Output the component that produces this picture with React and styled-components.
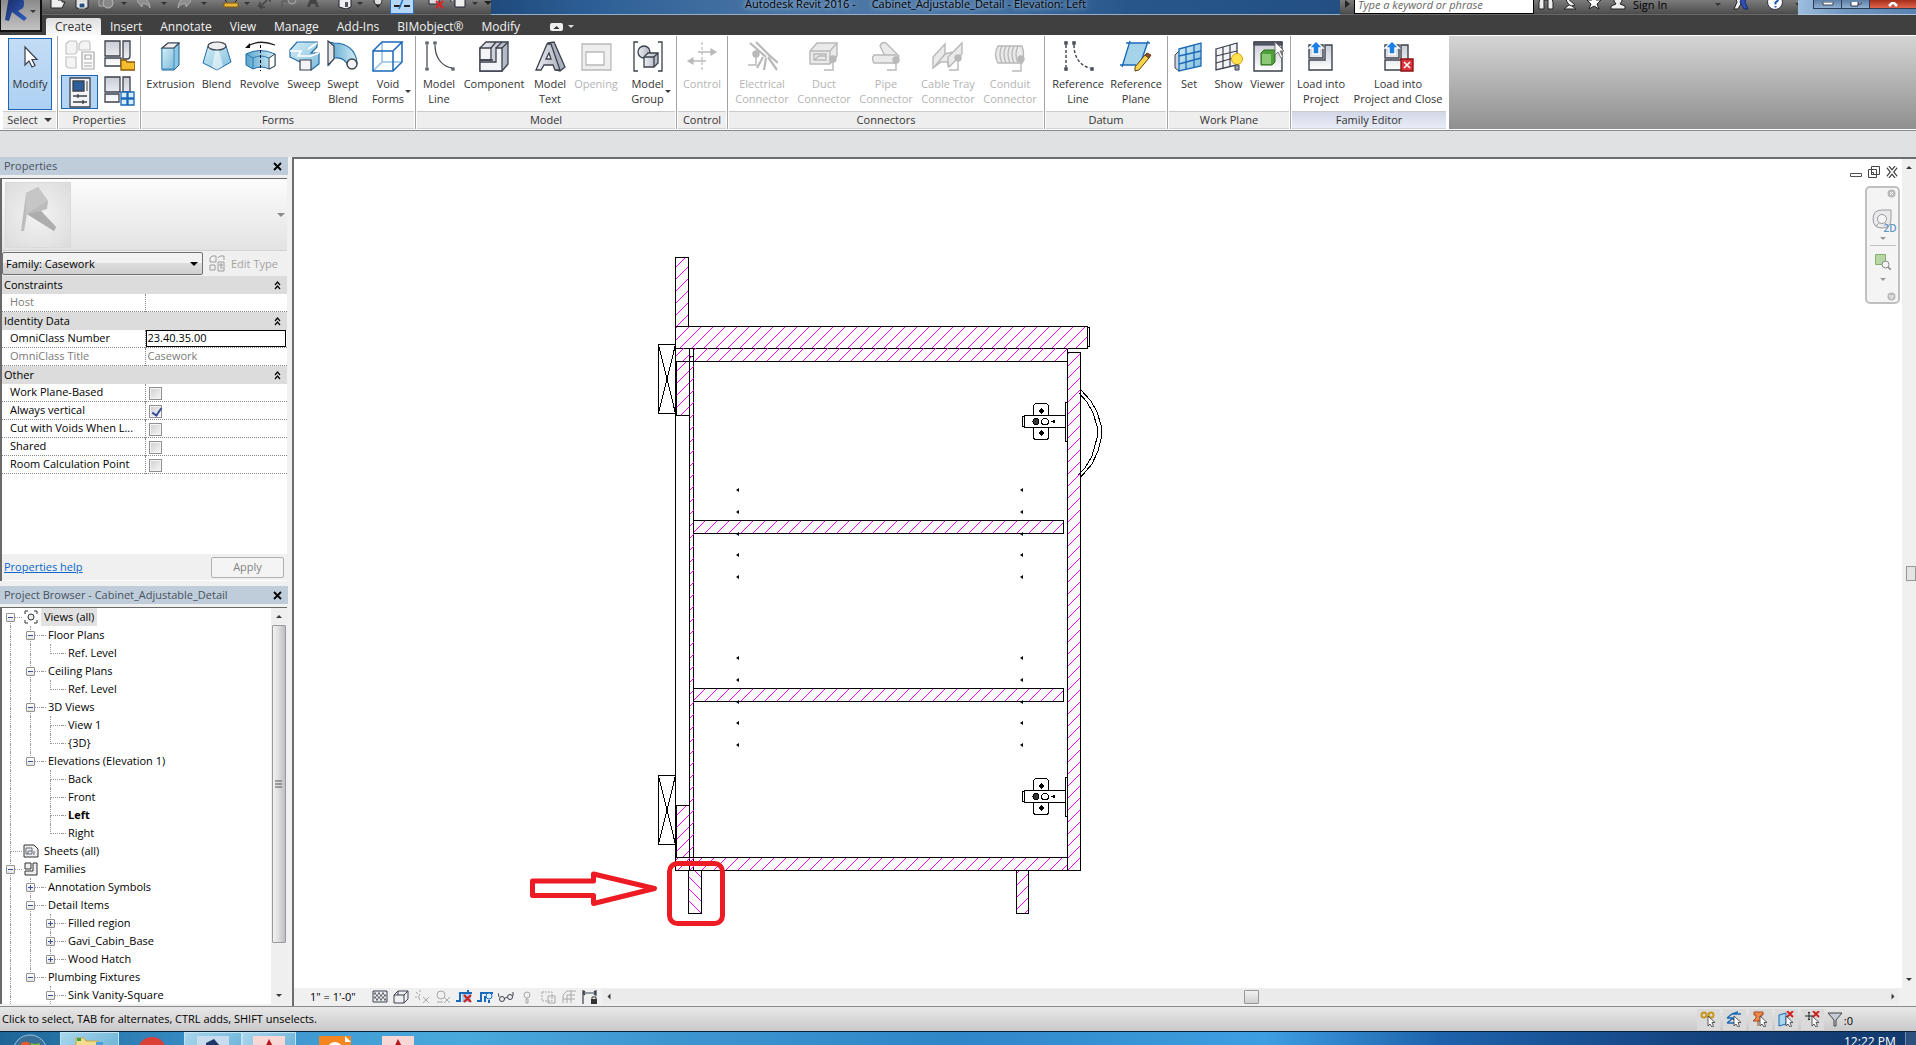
import React from "react";
import styled, { createGlobalStyle, css } from "styled-components";

const FONT = '"Open Sans", "Noto Sans", sans-serif';

const Global = createGlobalStyle`
  * { box-sizing: border-box; }
  html, body { margin: 0; height: 100%; overflow: hidden; }
  body { font: 11px/18px ${FONT}; color: #000; background: #f0f0f0; }
  #root { height: 100%; }
  button, input, select { font: inherit; color: inherit; margin: 0; padding: 0; border: 0; background: none; border-radius: 0; outline: 0; }
  svg { display: block; flex: none; }
`;

/* ---------- shared ---------- */

const Window = styled.div`
  height: 100vh;
  display: flex;
  flex-direction: column;
  overflow: hidden;
`;

const Caret = styled.i`
  flex: none;
  width: 0;
  height: 0;
  border: ${(p) => p.$size || 3}px solid transparent;
  border-bottom-width: 0;
  border-top-color: ${(p) => p.$color || "#3a3a3a"};
`;

const DefsHolder = styled.svg`
  position: absolute;
`;

const Gradients = () => (
  <DefsHolder width="0" height="0" aria-hidden="true">
    <defs>
      <linearGradient id="gBlue" x1="0" y1="0" x2="1" y2="1">
        <stop offset="0" stopColor="#d5eef7" />
        <stop offset="1" stopColor="#7fbcdb" />
      </linearGradient>
      <linearGradient id="gDeep" x1="0" y1="0" x2="1" y2="0">
        <stop offset="0" stopColor="#5aa5cd" />
        <stop offset="1" stopColor="#d3edf7" />
      </linearGradient>
      <linearGradient id="gGrey" x1="0" y1="0" x2="0" y2="1">
        <stop offset="0" stopColor="#c9ccd6" />
        <stop offset="1" stopColor="#ffffff" />
      </linearGradient>
      <linearGradient id="gSide" x1="0" y1="0" x2="1" y2="0">
        <stop offset="0" stopColor="#eceef2" />
        <stop offset="1" stopColor="#aeb4c0" />
      </linearGradient>
      <linearGradient id="gRevit" x1="0" y1="0" x2="1" y2="1">
        <stop offset="0" stopColor="#18275f" />
        <stop offset="1" stopColor="#2f5fc0" />
      </linearGradient>
    </defs>
  </DefsHolder>
);

const Icon = ({ size = 32, box = 32, children, ...rest }) => (
  <svg width={size} height={size} viewBox={`0 0 ${box} ${box}`} fill="none" aria-hidden="true" {...rest}>
    {children}
  </svg>
);

const INK = "#3b404c";
const SKY = "#1a68b8";
const OFF = "#b9b9b9";

const big = {
  cursor: (
    <Icon>
      <path d="M11 7v18l4-4 3 6 3-1.500-3-6h5z" fill="#fff" stroke={INK} strokeWidth="1.200" />
    </Icon>
  ),
  extrusion: (
    <Icon>
      <path d="M7 8l6-5h11v22l-5 5H7z" fill="#8cc6e0" stroke="#1e5f94" />
      <path d="M7 8h12v21H7z" fill="url(#gBlue)" stroke="#3f8fc0" />
      <path d="M7 8l6-5h11l-5 5z" fill="#f0f0f2" stroke={INK} strokeWidth="1.200" />
    </Icon>
  ),
  blend: (
    <Icon>
      <path d="M7 6L2 23l14 7 14-8L25 6z" fill="url(#gBlue)" stroke="#1e6ba8" />
      <path d="M14 11l-3 16 5 3 6-4-4-15z" fill="#fff" opacity=".55" />
      <ellipse cx="16" cy="6" rx="9" ry="4" fill="#eeeef1" stroke={INK} strokeWidth="1.200" />
    </Icon>
  ),
  revolve: (
    <Icon>
      <path d="M2 14q14-7 29 0v12l-6 3q-8-4-16 0l-7-4z" fill="url(#gDeep)" stroke="#1e6ba8" />
      <path d="M2 14l7 4q7-4 16 0M9 18v11" stroke="#2a7ab0" />
      <path d="M25 18l6-4v12l-6 3z" fill="#fff" stroke={INK} />
      <path d="M16.500 5v26" stroke="#000" strokeDasharray="3 2" />
      <path d="M4 6q12-7 27-1" stroke="#222" strokeWidth="1.300" />
      <path d="M1 8l5-5v5z" fill="#111" />
    </Icon>
  ),
  sweep: (
    <Icon>
      <path d="M9 2h20v5l-6 6h8v11l-8 6-11-8-10-5v-7z" fill="url(#gBlue)" stroke="#1e6ba8" strokeWidth="1.200" />
      <path d="M2 11h11l-3 5h13l8-3M29 3l-9 6" stroke="#fff" strokeWidth="1.600" />
      <path d="M12 20h11v10H12z" fill="#f4f4f6" stroke={INK} strokeWidth="1.200" />
    </Icon>
  ),
  swept: (
    <Icon>
      <path d="M2 2l5 1c13 0 22 7 23 20l-9 3C19 20 14 17 7 18l-5 7z" fill="url(#gDeep)" stroke="#1e6ba8" strokeWidth="1.200" />
      <path d="M1 1l6 5v13l-6 6z" fill="#e6e8ec" stroke={INK} strokeWidth="1.200" />
      <circle cx="25" cy="24" r="5" fill="#f4f4f6" stroke={INK} strokeWidth="1.400" />
    </Icon>
  ),
  voids: (
    <Icon stroke={SKY} strokeWidth="1.500">
      <path d="M10 2v20L1 31M10 22h20" stroke="#8ec0e8" />
      <path d="M1 11h20v20H1zM1 11l9-9h20l-9 9M30 2v20l-9 9" />
    </Icon>
  ),
  line: (
    <Icon stroke={INK} strokeWidth="1.200">
      <path d="M4 5v22M12 5c0 12 6 21 17 23" />
      <path d="M3 2h2v2H3zM3 28h2v2H3zM11 2h2v2h-2zM29 28h2v2h-2z" fill="#fff" />
    </Icon>
  ),
  component: (
    <Icon stroke={INK} strokeWidth="1.300">
      <path d="M2 8l6-6h22v22l-6 7H2z" fill="url(#gSide)" />
      <path d="M2 8h11v12H2zM2 22h16V8h6v23H2z" fill="#f3f4f7" />
      <path d="M13 8l5-6M18 8l6-6M24 8l6-6M2 20h13" />
    </Icon>
  ),
  text: (
    <Icon stroke={INK} strokeWidth="1.300">
      <path d="M14 3l6-1 11 25-5 4-4-1z" fill="#aab0bd" />
      <path d="M13 4h4l9 26h-5l-2-5h-9l-3 5H2z" fill="url(#gSide)" />
      <path d="M15 13l2 6h-5z" fill="#fff" />
    </Icon>
  ),
  opening: (
    <Icon stroke={OFF} strokeWidth="1.300">
      <path d="M2 4h29v26H2z" fill="#eee" />
      <path d="M6 12h18v13H6z" fill="#fff" />
    </Icon>
  ),
  group: (
    <Icon stroke={INK} strokeWidth="1.300">
      <path d="M6 2H2v29h4M26 2h4v29h-4" />
      <circle cx="12" cy="12" r="6" fill="url(#gSide)" />
      <path d="M12 17l4-4h10v10l-4 4H12z" fill="url(#gSide)" />
      <path d="M12 17h10v10M22 17l4-4" />
    </Icon>
  ),
  control: (
    <Icon stroke={OFF} strokeWidth="1.200">
      <path d="M16 2v29" strokeDasharray="3 2" />
      <path d="M12 12h14M20 21H6" strokeWidth="1.600" />
      <path d="M25 9l5 3-5 3zM7 18l-5 3 5 3z" fill={OFF} />
    </Icon>
  ),
  electrical: (
    <Icon stroke={OFF} strokeWidth="1.400">
      <path d="M4 3l16 14M10 2l14 14M17 17l-6 11M20 18l-2 12M22 17l9 13M23 15l9 8" strokeWidth="2.200" />
      <circle cx="10" cy="14" r="3" fill={OFF} />
      <path d="M10 14v11H2" />
    </Icon>
  ),
  duct: (
    <Icon stroke={OFF} strokeWidth="1.400">
      <path d="M2 11l7-8h20v13l-7 8H2z" fill="#eaeaea" />
      <path d="M2 11h20v13M22 11l7-8M6 14h12v6H6zM6 20l5-4h7" />
      <circle cx="25" cy="19" r="3" fill={OFF} />
      <path d="M25 20v10h-9" />
    </Icon>
  ),
  pipe: (
    <Icon stroke={OFF} strokeWidth="1.400">
      <path d="M10 6q2-5 6-3l13 13-5 7-10-9z" fill="#eaeaea" />
      <path d="M4 15h22v8H4q-3-4 0-8z" fill="#eaeaea" />
      <circle cx="26" cy="20" r="3" fill={OFF} />
      <path d="M26 20v10h-9" />
    </Icon>
  ),
  tray: (
    <Icon stroke={OFF} strokeWidth="1.400">
      <path d="M1 17L13 4v10l8-2 9-9v11L17 27l-1-5-7 0-8 6z" fill="#eaeaea" />
      <path d="M3 26l10-12M16 27V17l5-5" />
      <circle cx="26" cy="18" r="3" fill={OFF} />
      <path d="M26 18v12h-9" />
    </Icon>
  ),
  conduit: (
    <Icon stroke={OFF} strokeWidth="1.400">
      <path d="M4 6h24q3 8 0 17H4q-5-8 0-17z" fill="#eaeaea" />
      <path d="M8 6q-4 8 0 17M12 6q-4 8 0 17M16 6q-4 8 0 17M20 6q-4 8 0 17M24 6q-4 8 0 17" />
      <circle cx="27" cy="19" r="3" fill={OFF} />
      <path d="M27 19v12h-9" />
    </Icon>
  ),
  refLine: (
    <Icon stroke={INK} strokeWidth="1.400">
      <path d="M4 5v22M12 5c0 12 6 21 16 23" strokeDasharray="3 2" />
      <path d="M3 2h2v2H3zM3 28h2v2H3zM11 2h2v2h-2zM29 28h2v2h-2z" fill="#fff" />
    </Icon>
  ),
  refPlane: (
    <Icon>
      <path d="M9 3h19l-7 22H2z" fill="#a4d3ea" />
      <path d="M6 3h24M10 1L2 27M28 1l-7 21M0 25h16" stroke={SKY} strokeWidth="1.300" />
      <path d="M15 27l10-12 4 3-10 12-4 1z" fill="#fbd34a" stroke="#5b4314" />
      <path d="M25 15l4 3 2-3-4-2z" fill="#9b4a32" stroke="#5b4314" />
    </Icon>
  ),
  set: (
    <Icon stroke={SKY}>
      <path d="M2 15l4-4 8-2v18L6 31l-4-3z" fill="#cfd5df" stroke={INK} />
      <path d="M6 9l22-6v23L6 31z" fill="url(#gBlue)" strokeWidth="1.300" />
      <path d="M13 7v22M21 5v23M6 16l22-5M6 24l22-6" strokeWidth="1.300" />
    </Icon>
  ),
  show: (
    <Icon stroke={INK}>
      <path d="M3 9l21-6v22L3 30z" fill="#f3f3f5" strokeWidth="1.300" />
      <path d="M10 7v22M17 5v22M3 16l21-5M3 23l21-6" strokeWidth="1.200" />
      <circle cx="24" cy="19" r="5.500" fill="#ffe14d" stroke="#d7a21a" />
      <path d="M22 25h4v5h-4z" fill="#9aa0ac" />
    </Icon>
  ),
  viewer: (
    <Icon stroke={INK}>
      <path d="M2 2h28v29H2z" fill="url(#gGrey)" strokeWidth="1.400" />
      <path d="M2 2h28v3H2z" fill="#555a66" />
      <path d="M9 13l3-3h11v12l-3 3H9z" fill="#4fa03a" stroke="#2c6b1d" />
      <path d="M10 14h9v10h-9z" fill="#8cc977" stroke="none" />
      <path d="M23 2v13l3-3 3 6 2-1-3-6h4z" fill="#fff" stroke="#777" />
    </Icon>
  ),
  load: (
    <Icon stroke={INK} strokeWidth="1.400">
      <path d="M4 5h14v13H4zM4 20h16V5h7v25H4z" fill="url(#gGrey)" />
      <path d="M11 1l7 7h-4v6H8V8H4z" fill="#1b7fe6" stroke="#fff" />
    </Icon>
  ),
  loadClose: (
    <Icon stroke={INK} strokeWidth="1.400">
      <path d="M3 5h14v13H3zM3 20h16V5h7v25H3z" fill="url(#gGrey)" />
      <path d="M10 1l7 7h-4v6H7V8H3z" fill="#1b7fe6" stroke="#fff" />
      <path d="M19 19h12v12H19z" fill="#d8343a" stroke="#8d1216" />
      <path d="M22 22l6 6M28 22l-6 6" stroke="#fff" strokeWidth="1.600" />
    </Icon>
  ),
  types: (
    <Icon stroke="#c3c3c3" strokeWidth="1.200">
      <path d="M3 5l3-3h7l1 2v9l-2 2H3zM16 5l3-3h7l1 2v7H16zM3 18h10v11H5l-2-2z" fill="#f4f4f4" />
      <path d="M19 13h12v17H19z" fill="#fafafa" stroke="#a9a9a9" />
      <path d="M22 16h6v4h-6zM21 24h8M21 27h8" stroke="#a9a9a9" />
    </Icon>
  ),
  category: (
    <Icon stroke={INK} strokeWidth="1.300">
      <path d="M2 2h15v15H2zM20 2h7v15q0 3-3 3h-4zM2 19h16v8H2z" fill="url(#gGrey)" />
      <path d="M18 21h5l1 2h8v8H18z" fill="#f3bd2e" stroke="#8a5b07" />
    </Icon>
  ),
  palette: (
    <Icon stroke={INK} strokeWidth="1.300">
      <path d="M6 2h20v29H6z" fill="#f3f4f7" />
      <path d="M9 5h11v10H9z" fill="#2d5f9c" />
      <path d="M22 5h2v10h-2z" fill="#999" stroke="none" />
      <path d="M9 20h14M9 26h14M14 18v4M19 24v4" />
    </Icon>
  ),
  familyTypes: (
    <Icon stroke={INK} strokeWidth="1.300">
      <path d="M2 2h15v15H2zM20 2h7v15H20zM2 19h14v8H2z" fill="url(#gGrey)" />
      <path d="M18 17h6v6h-6zM25 17h6v6h-6zM18 24h6v6h-6zM25 24h6v6h-6z" fill="#d7edfa" stroke={SKY} />
    </Icon>
  ),
};

const tiny = (children) => (
  <Icon size={16} box={16}>
    {children}
  </Icon>
);

/* ---------- header ---------- */

const Header = styled.header`
  display: grid;
  grid-template: 15px 20px / 42px 1fr;
  background: #404040;
  flex: none;
`;

const AppButton = styled.button`
  grid-row: 1 / 3;
  height: 32px;
  display: flex;
  align-items: flex-end;
  overflow: hidden;
  border: solid #111;
  border-width: 0 2px 2px 1px;
  background: linear-gradient(#8b8b8b, #c2c2c2);
  gap: 2px;
`;

const AppLogo = styled.svg`
  align-self: flex-start;
`;

const AppCaret = styled(Caret)`
  align-self: center;
  margin-top: -8px;
`;

const TitleBar = styled.div`
  display: flex;
  min-width: 0;
  overflow: hidden;
`;

const QuickAccess = styled.div`
  flex: none;
  width: 449px;
  display: flex;
  align-items: flex-end;
  padding: 0 2px 5px 4px;
  height: 15px;
  background: linear-gradient(#7b7b7b, #4c4c4c);
  border-bottom: 1px solid #686868;
`;

const QuickButton = styled.button`
  flex: none;
  width: ${(p) => p.$width || 24}px;
  display: flex;
  align-items: flex-end;
  justify-content: center;
  ${(p) =>
    p.$active &&
    css`
      margin-bottom: -5px;
      padding-bottom: 3px;
      background: #b5d6f5;
      border: 1px solid #2a6fc0;
    `}
`;

const QuickCaret = styled(Caret)`
  margin: 0 3px 4px;
`;

const QuickLine = styled.i`
  width: 1px;
  height: 20px;
  margin: 0 5px -5px 6px;
  background: #9a9a9a;
`;

const TitleText = styled.div`
  flex: 1;
  display: flex;
  justify-content: center;
  align-items: flex-end;
  gap: 16px;
  white-space: nowrap;
  line-height: 12px;
  padding-bottom: 4px;
  height: 15px;
  background: linear-gradient(90deg, #1f4a7d, #2d5f96 12%, #4b76a5 35%, #4b76a5 55%, #28568b 75%, #234f83);
  border-bottom: 1px solid #94aecb;
  text-shadow: 0 0 6px #9fb8d2, 0 0 4px #9fb8d2;
`;

const InfoCenter = styled.div`
  flex: none;
  width: 458px;
  height: 15px;
  display: flex;
  align-items: flex-end;
  background: linear-gradient(#7b7b7b, #4c4c4c);
  border-bottom: 1px solid #686868;
`;

const SideCaret = styled.i`
  border: 4px solid transparent;
  border-right-width: 0;
  border-left: 5px solid #222;
  margin: 0 4px 6px 5px;
`;

const Search = styled.input`
  width: 180px;
  height: 14px;
  flex: none;
  background: #fff;
  border: solid #000;
  border-width: 0 1px 1px;
  padding: 0 3px 5px;
  font-style: italic;
  line-height: 12px;
  &::placeholder { color: #666; opacity: 1; }
`;

const InfoIcons = styled.div`
  flex: 1;
  display: flex;
  align-items: flex-end;
  padding-bottom: 4px;
`;

const InfoButton = styled.button`
  display: flex;
  width: ${(p) => p.$width || 24}px;
  justify-content: center;
  align-items: flex-end;
`;

const SignIn = styled.button`
  line-height: 11px;
  width: 82px;
  text-align: left;
  padding-left: 3px;
`;

const WindowButtons = styled.div`
  flex: none;
  width: 118px;
  height: 15px;
  display: flex;
  justify-content: flex-end;
  background: linear-gradient(100deg, #9fbfdf, #7196bf 40%, #5a82b0);
  border-bottom: 1px solid #b4c8dd;
`;

const WindowButton = styled.button`
  width: ${(p) => (p.$close ? 47 : 28)}px;
  height: 9px;
  display: flex;
  align-items: flex-end;
  justify-content: center;
  overflow: hidden;
  border: solid #2c3e55;
  border-width: 0 0 1px 1px;
  background: ${(p) => (p.$close ? "linear-gradient(#a52d1a, #e0654a)" : "linear-gradient(#5f7fa5, #8fb0d2)")};
`;

const TabBar = styled.nav`
  display: flex;
  align-items: flex-end;
  padding-left: 4px;
`;

const Tab = styled.button`
  height: 17px;
  font-size: 12px;
  line-height: 16px;
  padding: 0 9px;
  color: ${(p) => (p.$active ? "#333" : "#f2f2f2")};
  background: ${(p) => (p.$active ? "linear-gradient(#dedede, #fafafa)" : "none")};
  border-radius: 2px 2px 0 0;
`;

const TabMinimise = styled.button`
  display: flex;
  align-items: center;
  gap: 5px;
  height: 17px;
  margin-left: 21px;
`;

const QuickAccessBar = () => (
  <QuickAccess>
    <QuickButton aria-label="Open">{tiny(<path d="M1 14V5h6l1 2h4v2h3l-3 6H1z" fill="#eee" stroke="#222" />)}</QuickButton>
    <QuickButton aria-label="Save">{tiny(<><path d="M2 2h12v13H2z" fill="#ddd" stroke="#223" /><path d="M5 10h6v5H5z" fill="#234e7c" stroke="#fff" /></>)}</QuickButton>
    <QuickButton aria-label="Synchronize">{tiny(<><path d="M1 4h9v9H1z" fill="#777" stroke="#aaa" /><circle cx="10" cy="10" r="5" fill="#888" stroke="#bbb" /></>)}</QuickButton>
    <QuickCaret $color="#333" />
    <QuickButton $width={28} aria-label="Undo">{tiny(<path d="M1 8l5-5v3q8 0 8 9-2-5-8-4v3z" fill="#8e8e8e" stroke="#aaa" />)}</QuickButton>
    <QuickCaret $color="#333" />
    <QuickButton $width={28} aria-label="Redo">{tiny(<path d="M15 8l-5-5v3q-8 0-8 9 2-5 8-4v3z" fill="#8e8e8e" stroke="#aaa" />)}</QuickButton>
    <QuickCaret $color="#333" />
    <QuickLine />
    <QuickButton $width={20} aria-label="Measure">{tiny(<><path d="M1 6h14M4 3L1 6l3 3M12 3l3 3-3 3" stroke="#222" /><path d="M1 10h14v4H1z" fill="#e8b536" stroke="#7a5a10" /></>)}</QuickButton>
    <QuickCaret $color="#333" />
    <QuickButton aria-label="Aligned Dimension">{tiny(<path d="M3 14L13 4M3 9v5h5M13 9V4H8M1 12l4 4" stroke="#444" strokeWidth="1.500" />)}</QuickButton>
    <QuickButton aria-label="Tag">{tiny(<><path d="M1 14V8h6" stroke="#555" /><circle cx="11" cy="7" r="4" stroke="#aaa" fill="#777" /></>)}</QuickButton>
    <QuickButton aria-label="Text">{tiny(<path d="M2 14L7 1h2l5 13h-3l-1-3H6l-1 3z" fill="#444" />)}</QuickButton>
    <QuickLine />
    <QuickButton $width={18} aria-label="3D View">{tiny(<><path d="M2 7l6-5 6 5v7l-5 2-7-2z" fill="#eee" stroke="#223" /><path d="M8 9h3v5H8z" fill="#555" /></>)}</QuickButton>
    <QuickCaret $color="#333" />
    <QuickButton aria-label="Section">{tiny(<><path d="M3 8l5 7 4-6z" fill="#222" /><circle cx="8" cy="8" r="4" fill="#ddd" stroke="#333" /></>)}</QuickButton>
    <QuickButton $active aria-label="Thin Lines">{tiny(<><path d="M0 5h7M0 12h7M10 5h6M10 12h6" stroke="#222" strokeWidth="2" /><path d="M11 0L5 15" stroke="#2573c4" strokeWidth="1.500" /></>)}</QuickButton>
    <QuickLine />
    <QuickButton $width={22} aria-label="Close Hidden">{tiny(<><path d="M1 3h10v8H1z" fill="#ddd" stroke="#223" /><path d="M8 8l7 7M15 8l-7 7" stroke="#d22" strokeWidth="2" /></>)}</QuickButton>
    <QuickButton $width={22} aria-label="Switch Windows">{tiny(<path d="M5 6h10v8H5zM1 9V2h8" fill="#eee" stroke="#223" />)}</QuickButton>
    <QuickCaret $color="#333" />
    <QuickCaret $color="#222" $size={4} />
  </QuickAccess>
);

const TABS = ["Create", "Insert", "Annotate", "View", "Manage", "Add-Ins", "BIMobject®", "Modify"];

const AppHeader = () => (
  <Header>
    <AppButton aria-label="Application menu">
      <AppLogo width="27" height="24" viewBox="0 0 27 24" aria-hidden="true">
        <path d="M8-4h12q5 6 2 12l-5 3 9 7-3 3-12-9-3 9-4-1z" fill="url(#gRevit)" />
      </AppLogo>
      <AppCaret />
    </AppButton>
    <TitleBar>
      <QuickAccessBar />
      <TitleText>
        <span>Autodesk Revit 2016 -</span>
        <span>Cabinet_Adjustable_Detail - Elevation: Left</span>
      </TitleText>
      <InfoCenter>
        <SideCaret />
        <Search placeholder="Type a keyword or phrase" aria-label="Search help" />
        <InfoIcons>
          <InfoButton aria-label="Search">{tiny(<path d="M1 15V8l2-6h3v13zM15 15V8l-2-6h-3v13zM6 6h4" fill="#eee" stroke="#222" />)}</InfoButton>
          <InfoButton aria-label="Subscription">{tiny(<path d="M3 2l10 9q-7 4-10-9zM7 11l-5 4h12l-4-3" fill="#eee" stroke="#222" />)}</InfoButton>
          <InfoButton aria-label="Favorites">{tiny(<path d="M8 1l2 5h5l-4 4 2 5-5-3-5 3 2-5-4-4h5z" fill="#fff" stroke="#222" />)}</InfoButton>
          <InfoButton aria-label="Account">{tiny(<path d="M4 0h8v7l-2 3 5 2v3H1v-3l5-2-2-3z" fill="#eee" stroke="#222" />)}</InfoButton>
          <SignIn>Sign In</SignIn>
          <QuickCaret $color="#333" />
          <InfoButton $width={34} aria-label="Exchange Apps">{tiny(<><path d="M1 1h5l3 7-4 7H1l3-7z" fill="#eee" stroke="#222" /><path d="M15 1h-5L7 8l4 7h4l-3-7z" fill="#2f4fb5" stroke="#1a2a66" /></>)}</InfoButton>
          <InfoButton $width={34} aria-label="Help">{tiny(<><circle cx="8" cy="8" r="7.500" fill="#fff" stroke="#334" /><path d="M5.500 6q0-3 3-3t2.500 3q-.5 1.500-2.500 2.500v2M8.500 12v1.500" stroke="#2257b8" strokeWidth="2" /></>)}</InfoButton>
          <QuickCaret $color="#333" />
        </InfoIcons>
      </InfoCenter>
      <WindowButtons>
        <WindowButton aria-label="Minimize"><svg width="12" height="6"><path d="M1 0h10v3H1z" fill="#fff" stroke="#445" /></svg></WindowButton>
        <WindowButton aria-label="Restore"><svg width="12" height="6"><path d="M1 0v4h7V0M8 2h3V0" fill="#fff" stroke="#334" /></svg></WindowButton>
        <WindowButton $close aria-label="Close"><svg width="12" height="6"><path d="M6 0l4 4M6 0L2 4" stroke="#fff" strokeWidth="2.500" /></svg></WindowButton>
      </WindowButtons>
    </TitleBar>
    <TabBar aria-label="Ribbon tabs">
      {TABS.map((t, i) => (
        <Tab key={t} $active={i === 0}>{t}</Tab>
      ))}
      <TabMinimise aria-label="Minimize ribbon">
        <svg width="13" height="8"><rect width="13" height="8" rx="2" fill="#eee" /><path d="M3.500 6l3-3 3 3z" fill="#333" /></svg>
        <Caret $color="#ddd" />
      </TabMinimise>
    </TabBar>
  </Header>
);

/* ---------- ribbon ---------- */

const Ribbon = styled.div`
  flex: none;
  display: flex;
  height: 96px;
  padding: 1px 0 1px 2px;
  background: #fff;
  border-bottom: 1px solid #8a8a8a;
`;

const RibbonRest = styled.div`
  flex: 1;
  margin-left: 1px;
  background: linear-gradient(#d5d5d5, #8f8f8f);
`;

const Panel = styled.section`
  flex: none;
  display: flex;
  flex-direction: column;
  width: ${(p) => p.$width}px;
  border-right: 1px solid #a3a3a3;
  &:last-of-type { border-right-color: #fff; }
`;

const PanelBody = styled.div`
  flex: 1;
  display: flex;
  padding-left: ${(p) => p.$pad || 0}px;
`;

const PanelTitle = styled.div`
  height: 18px;
  margin: 0 1px;
  border-top: 1px solid #cbcbcb;
  border-bottom: 1px solid #d4d4d4;
  background: ${(p) => (p.$accent ? "linear-gradient(#d3d7e6, #e9ecf8)" : "#eeeeee")};
  color: #333;
  line-height: 16px;
  display: flex;
  align-items: center;
  justify-content: center;
  gap: 6px;
`;

const Tool = styled.button`
  flex: none;
  width: ${(p) => p.$width}px;
  display: flex;
  flex-direction: column;
  align-items: center;
  padding-top: 4px;
  gap: 4px;
  color: ${(p) => (p.disabled ? "#b4b4b4" : "#333")};
  line-height: 15px;
  white-space: pre;
  text-align: center;
`;

const ToolLabel = styled.span`
  display: flex;
  align-items: center;
  position: relative;
  & > i { position: absolute; right: -7px; top: 14px; }
`;

const ModifyTool = styled(Tool)`
  height: 72px;
  margin-top: 2px;
  padding-top: 1px;
  border: 1px solid #1c66b8;
  background: linear-gradient(#c4dcf5, #add1f3);
`;

const ToolGrid = styled.div`
  display: grid;
  grid-template: 36px 36px / 40px 40px;
  padding-top: 1px;
`;

const SmallTool = styled.button`
  display: flex;
  align-items: center;
  justify-content: center;
  ${(p) =>
    p.$active &&
    css`
      margin: 2px 1px 0 2px;
      border: 1px solid #1c66b8;
      background: #b4d4f4;
    `}
`;

const GROUPS = [
  { title: "Forms", width: 275, pad: 2, tools: [["Extrusion", 55, "extrusion"], ["Blend", 37, "blend"], ["Revolve", 49, "revolve"], ["Sweep", 40, "sweep"], ["Swept\nBlend", 38, "swept"], ["Void\nForms", 52, "voids", "menu"]] },
  { title: "Model", width: 261, pad: 1, tools: [["Model\nLine", 44, "line"], ["Component", 66, "component"], ["Model\nText", 46, "text"], ["Opening", 46, "opening", "off"], ["Model\nGroup", 57, "group", "menu"]] },
  { title: "Control", width: 51, pad: 0, tools: [["Control", 50, "control", "off"]] },
  { title: "Connectors", width: 317, pad: 3, tools: [["Electrical\nConnector", 62, "electrical", "off"], ["Duct\nConnector", 62, "duct", "off"], ["Pipe\nConnector", 62, "pipe", "off"], ["Cable Tray\nConnector", 62, "tray", "off"], ["Conduit\nConnector", 62, "conduit", "off"]] },
  { title: "Datum", width: 123, pad: 4, tools: [["Reference\nLine", 58, "refLine"], ["Reference\nPlane", 58, "refPlane"]] },
  { title: "Work Plane", width: 123, pad: 2, tools: [["Set", 38, "set"], ["Show", 41, "show"], ["Viewer", 37, "viewer"]] },
  { title: "Family Editor", width: 157, pad: 1, accent: true, tools: [["Load into\nProject", 58, "load"], ["Load into\nProject and Close", 96, "loadClose"]] },
];

const RibbonBar = () => (
  <Ribbon>
    <Panel $width={56}>
      <PanelBody $pad={6}>
        <ModifyTool $width={44}>
          {big.cursor}
          <span>Modify</span>
        </ModifyTool>
      </PanelBody>
      <PanelTitle>Select <Caret $size={4} /></PanelTitle>
    </Panel>
    <Panel $width={83}>
      <PanelBody $pad={1}>
        <ToolGrid>
          <SmallTool disabled aria-label="Type Properties">{big.types}</SmallTool>
          <SmallTool aria-label="Family Category">{big.category}</SmallTool>
          <SmallTool $active aria-label="Properties">{big.palette}</SmallTool>
          <SmallTool aria-label="Family Types">{big.familyTypes}</SmallTool>
        </ToolGrid>
      </PanelBody>
      <PanelTitle>Properties</PanelTitle>
    </Panel>
    {GROUPS.map((g) => (
      <Panel key={g.title} $width={g.width}>
        <PanelBody $pad={g.pad}>
          {g.tools.map(([label, width, icon, state]) => (
            <Tool key={label} $width={width} disabled={state === "off"}>
              {big[icon]}
              <ToolLabel>
                {label}
                {state === "menu" && <Caret $size={3} />}
              </ToolLabel>
            </Tool>
          ))}
        </PanelBody>
        <PanelTitle $accent={g.accent}>{g.title}</PanelTitle>
      </Panel>
    ))}
    <RibbonRest />
  </Ribbon>
);

const OptionsBar = styled.div`
  flex: none;
  height: 26px;
  background: #e0e1e3;
`;

/* ---------- docked palettes ---------- */

const Workspace = styled.main`
  flex: 1;
  min-height: 0;
  display: flex;
`;

const Dock = styled.aside`
  flex: none;
  width: 292px;
  padding-right: 4px;
  display: flex;
  flex-direction: column;
  background: #f0f0f0;
`;

const PaletteTitle = styled.h2`
  flex: none;
  display: flex;
  align-items: center;
  justify-content: space-between;
  height: 18px;
  margin: 0 0 3px;
  padding: 0 6px 0 4px;
  font-size: 11px;
  font-weight: 400;
  line-height: 18px;
  color: #48515c;
  background: #bfcddb;
`;

const CloseButton = styled.button`
  display: flex;
`;

const Palette = styled.section`
  display: flex;
  flex-direction: column;
  flex: ${(p) => (p.$fill ? "1" : "none")};
  height: ${(p) => (p.$fill ? "auto" : "403px")};
  min-height: 0;
  margin: 0 1px ${(p) => (p.$fill ? 2 : 5)}px 0;
  border: solid #696969;
  border-width: 1px 0 0 2px;
`;

const Preview = styled.button`
  flex: none;
  display: flex;
  align-items: center;
  justify-content: space-between;
  height: 72px;
  padding: 2px 2px 2px 3px;
  background: linear-gradient(#fcfcfc, #e3e3e3);
  border-bottom: 1px solid #d2d2d2;
`;

const Thumb = styled.span`
  width: 66px;
  height: 66px;
  border: 1px solid #dadada;
  background: radial-gradient(#f3f3f3, #dcdcdc);
`;

const TypeRow = styled.div`
  flex: none;
  display: flex;
  align-items: center;
  height: 25px;
  gap: 6px;
`;

const SelectBox = styled.div`
  display: grid;
  align-items: center;
  width: 201px;
  height: 23px;
  border: 1px solid #707070;
  border-radius: 2px;
  background: linear-gradient(#f2f2f2 50%, #dddddd 50%, #d0d0d0);
  & > * { grid-area: 1 / 1; }
  & > i { justify-self: end; margin-right: 4px; pointer-events: none; }
`;

const Select = styled.select`
  appearance: none;
  width: 100%;
  padding-left: 3px;
`;

const EditType = styled.button`
  display: flex;
  align-items: center;
  gap: 5px;
  color: #a3a3a3;
`;

const TableArea = styled.div`
  flex: 1;
  background: #fff;
`;

const PropTable = styled.table`
  width: 100%;
  table-layout: fixed;
  border-spacing: 0;
  border-collapse: separate;
  & tr { height: 18px; }
`;

const GroupCell = styled.th`
  padding: 0 6px 0 2px;
  height: 18px;
  font-weight: 400;
  text-align: left;
  line-height: 18px;
  background: #dcdcdc;
  & > div { display: flex; justify-content: space-between; align-items: center; }
`;

const NameCell = styled.th`
  height: 18px;
  padding: 0 0 0 8px;
  font-weight: 400;
  text-align: left;
  vertical-align: top;
  line-height: 16px;
  white-space: nowrap;
  overflow: hidden;
  color: ${(p) => (p.$off ? "#7b7b7b" : "#000")};
  border-bottom: 1px dotted #888;
`;

const ValueCell = styled.td`
  height: 18px;
  padding: 0 1px 0 0;
  border-left: 1px dotted #888;
  border-bottom: 1px dotted #888;
`;

const ValueInput = styled.input`
  display: block;
  width: 100%;
  height: 17px;
  padding: 0 1px 2px;
  color: ${(p) => (p.disabled ? "#7b7b7b" : "#000")};
  border: 1px solid ${(p) => (p.$focus ? "#000" : "transparent")};
`;

const Check = styled.input`
  appearance: none;
  display: block;
  width: 13px;
  height: 13px;
  margin: 2px 0 0 3px;
  border: 1px solid #8e8f8f;
  background: linear-gradient(135deg, #cfcfcf, #f6f6f6);
  box-shadow: inset 0 0 0 1px #f4f4f4;
  &:checked::after {
    content: "";
    display: block;
    width: 4px;
    height: 8px;
    margin: 0 0 0 4px;
    border: solid #3a4c9a;
    border-width: 0 2px 2px 0;
    transform: rotate(35deg);
  }
`;

const PaletteFooter = styled.div`
  flex: none;
  height: 27px;
  display: flex;
  align-items: center;
  justify-content: space-between;
  padding: 0 3px 0 2px;
  border-bottom: 1px solid #fff;
  & a { color: #0a66c8; }
`;

const Apply = styled.button`
  width: 73px;
  height: 21px;
  border: 1px solid #adb2b5;
  border-radius: 2px;
  color: #838383;
  background: #f4f4f4;
`;

const CloseX = () => (
  <svg width="9" height="9" aria-hidden="true"><path d="M1 1l7 7M8 1L1 8" stroke="#000" strokeWidth="1.800" /></svg>
);

const Chevrons = () => (
  <svg width="7" height="9" aria-hidden="true"><path d="M1 4l2.500-3L6 4M1 8l2.500-3L6 8" fill="none" stroke="#000" strokeWidth="1.200" /></svg>
);

const PROPS = [
  { group: "Constraints" },
  { name: "Host", off: true, value: "" },
  { group: "Identity Data" },
  { name: "OmniClass Number", value: "23.40.35.00", focus: true },
  { name: "OmniClass Title", off: true, value: "Casework" },
  { group: "Other" },
  { name: "Work Plane-Based", checked: false },
  { name: "Always vertical", checked: true },
  { name: "Cut with Voids When L...", checked: false },
  { name: "Shared", checked: false },
  { name: "Room Calculation Point", checked: false },
];

const PropertyRow = ({ row, id }) =>
  row.group ? (
    <tr>
      <GroupCell colSpan={2}><div>{row.group}<Chevrons /></div></GroupCell>
    </tr>
  ) : (
    <tr>
      <NameCell $off={row.off}><label htmlFor={id}>{row.name}</label></NameCell>
      <ValueCell>
        {"checked" in row ? (
          <Check id={id} type="checkbox" defaultChecked={row.checked} />
        ) : (
          <ValueInput id={id} defaultValue={row.value} disabled={row.off} $focus={row.focus} />
        )}
      </ValueCell>
    </tr>
  );

const Properties = () => (
  <>
    <PaletteTitle>Properties<CloseButton aria-label="Close Properties"><CloseX /></CloseButton></PaletteTitle>
    <Palette>
      <Preview aria-label="Type selector">
        <Thumb>
          <svg width="64" height="64" viewBox="0 0 64 64" aria-hidden="true">
            <path d="M20 10l12-6 10 14-1 8-6 2 15 16-2 4-27-17-3 17h-3z" fill="#bcbcbc" />
            <path d="M20 10l12-6 10 14-22 13z" fill="#c6c6c6" />
            <path d="M35 28l15 16-2 4-27-17z" fill="#adadad" />
          </svg>
        </Thumb>
        <Caret $size={4} $color="#8c8c8c" />
      </Preview>
      <TypeRow>
        <SelectBox>
          <Select aria-label="Family" defaultValue="Family: Casework"><option>Family: Casework</option></Select>
          <Caret $size={4} $color="#000" />
        </SelectBox>
        <EditType disabled>
          <svg width="17" height="17" fill="none" stroke="#9c9c9c" aria-hidden="true"><path d="M1 3l2-2h4v6H1zM9 3l2-2h4v4M1 10h5v5H1zM9 7h6v9H9zM11 9h2v2h-2zM11 13h3" /></svg>
          Edit Type
        </EditType>
      </TypeRow>
      <TableArea>
        <PropTable>
          <tbody>
            {PROPS.map((row, i) => (
              <PropertyRow key={i} row={row} id={`prop-${i}`} />
            ))}
          </tbody>
        </PropTable>
      </TableArea>
      <PaletteFooter>
        <a href="#help">Properties help</a>
        <Apply disabled>Apply</Apply>
      </PaletteFooter>
    </Palette>
  </>
);

/* ---------- project browser ---------- */

const BrowserBody = styled.div`
  flex: 1;
  display: flex;
  min-height: 0;
  background: #fff;
`;

const Tree = styled.ul`
  flex: 1;
  min-width: 0;
  margin: 0;
  padding: 0;
  list-style: none;
  overflow: hidden;
`;

const TreeRow = styled.li`
  display: flex;
  align-items: center;
  height: 18px;
  white-space: nowrap;
  font-weight: ${(p) => (p.$bold ? 700 : 400)};
`;

/* One indent column: its vertical dotted guide, and the short stub to the right. */
const Guide = styled.span`
  flex: none;
  width: 20px;
  height: 18px;
  padding-left: 8px;
  display: grid;
  grid-template-rows: 10px 8px;
  grid-template-columns: 1px 1fr;
  & > i:nth-of-type(1) { border-left: 1px dotted ${(p) => (p.$up ? "#9a9a9a" : "transparent")}; }
  & > i:nth-of-type(2) { border-bottom: 1px dotted ${(p) => (p.$stub ? "#9a9a9a" : "transparent")}; }
  & > i:nth-of-type(3) { border-left: 1px dotted ${(p) => (p.$down ? "#9a9a9a" : "transparent")}; }
`;

const Expander = styled.button`
  position: relative;
  z-index: 1;
  flex: none;
  width: 9px;
  height: 9px;
  margin: 1px 7px 0 -16px;
  border: 1px solid #919191;
  border-radius: 1px;
  background:
    linear-gradient(#3b4f94, #3b4f94) center / 5px 1px no-repeat,
    ${(p) => (p.$open ? "" : "linear-gradient(#3b4f94, #3b4f94) center / 1px 5px no-repeat,")}
    linear-gradient(#fff, #e4e4e4);
`;

const Stub = styled.i`
  flex: none;
  width: 4px;
  height: 1px;
  margin: 1px 2px 0 0;
  border-bottom: 1px dotted #9a9a9a;
`;

const NodeIcon = styled.span`
  width: 18px;
  display: flex;
  justify-content: center;
`;

const NodeLabel = styled.span`
  padding: 0 3px 0 ${(p) => (p.$root ? 3 : 0)}px;
  margin-left: ${(p) => (p.$root ? 1 : 0)}px;
  background: ${(p) => (p.$selected ? "#e2e2e2" : "none")};
`;

const nodeIcons = {
  views: <svg width="14" height="14" fill="none" stroke="#333" aria-hidden="true"><path d="M1 4V1h3M10 1h3v3M13 10v3h-3M4 13H1v-3" /><circle cx="7" cy="7" r="3" fill="#eee" /></svg>,
  sheets: <svg width="16" height="14" fill="none" stroke="#333" aria-hidden="true"><path d="M1 1h10l4 4v8H1z" fill="#eee" /><path d="M3 4h6v6H3zM5 10V7h4M11 7v4" stroke="#667" /></svg>,
  families: <svg width="14" height="14" fill="none" stroke="#333" aria-hidden="true"><path d="M1 1h6v6H1zM9 1h4v12H1V9h8z" fill="#eee" /></svg>,
};

/* guides: p = vertical line passes, t = tee, l = corner, f = first (line below only), blank = nothing */
const NODES = [
  ["f", "-", "Views (all)", "views"],
  ["pt", "-", "Floor Plans"],
  ["ppl", "", "Ref. Level"],
  ["pt", "-", "Ceiling Plans"],
  ["ppl", "", "Ref. Level"],
  ["pt", "-", "3D Views"],
  ["ppt", "", "View 1"],
  ["ppl", "", "{3D}"],
  ["pl", "-", "Elevations (Elevation 1)"],
  ["p t", "", "Back"],
  ["p t", "", "Front"],
  ["p t", "", "Left"],
  ["p l", "", "Right"],
  ["t", "", "Sheets (all)", "sheets"],
  ["t", "-", "Families", "families"],
  ["pt", "+", "Annotation Symbols"],
  ["pt", "-", "Detail Items"],
  ["ppt", "+", "Filled region"],
  ["ppt", "+", "Gavi_Cabin_Base"],
  ["ppl", "+", "Wood Hatch"],
  ["pl", "-", "Plumbing Fixtures"],
  ["p t", "-", "Sink Vanity-Square"],
];

const VScroll = styled.div`
  flex: none;
  width: 16px;
  display: flex;
  flex-direction: column;
  align-items: center;
  background: #efefef;
`;

const ScrollArrow = styled.button`
  height: 17px;
  display: flex;
  align-items: center;
  transform: ${(p) => (p.$up ? "rotate(180deg)" : "none")};
`;

const ScrollThumb = styled.div`
  width: 14px;
  flex: 318;
  display: flex;
  align-items: center;
  justify-content: center;
  border: 1px solid #9a9a9a;
  border-radius: 1px;
  background: linear-gradient(90deg, #f2f2f2, #dcdcdc 50%, #bdbdc4);
`;

const ScrollRest = styled.div`
  flex: 44;
`;

const Browser = () => (
  <>
    <PaletteTitle>Project Browser - Cabinet_Adjustable_Detail<CloseButton aria-label="Close Project Browser"><CloseX /></CloseButton></PaletteTitle>
    <Palette $fill>
      <BrowserBody>
        <Tree>
          {NODES.map(([guides, toggle, label, icon], i) => (
            <TreeRow key={i} $bold={label === "Left"}>
              {guides.split("").map((g, k) => (
                <Guide key={k} $up={"ptl".includes(g)} $down={"ptf".includes(g)} $stub={"tlf".includes(g)}><i /><i /><i /></Guide>
              ))}
              {toggle && <Expander $open={toggle === "-"} aria-label={`Toggle ${label}`} />}
              {icon ? <NodeIcon>{nodeIcons[icon]}</NodeIcon> : <Stub />}
              <NodeLabel $root={!!icon} $selected={icon === "views"}>{label}</NodeLabel>
            </TreeRow>
          ))}
        </Tree>
        <VScroll>
          <ScrollArrow $up aria-label="Scroll up"><Caret /></ScrollArrow>
          <ScrollThumb><svg width="8" height="9"><path d="M0 1h7M0 4h7M0 7h7" stroke="#555" /></svg></ScrollThumb>
          <ScrollRest />
          <ScrollArrow aria-label="Scroll down"><Caret /></ScrollArrow>
        </VScroll>
      </BrowserBody>
    </Palette>
  </>
);

/* ---------- drawing ---------- */

const ViewFrame = styled.section`
  flex: 1;
  min-width: 0;
  display: grid;
  grid-template: 1fr 17px / 1fr 14px;
  padding-bottom: 1px;
  border: solid #6d6d6d;
  border-width: 2px 0 0 2px;
  background: #f0f0f0;
`;

const Canvas = styled.div`
  position: relative;
  overflow: hidden;
  background: #fff;
`;

const Drawing = styled.svg`
  position: absolute;
  left: 226px;
  top: 81px;
`;

const ViewTools = styled.div`
  position: absolute;
  top: 7px;
  right: 2px;
  display: flex;
  flex-direction: column;
  align-items: flex-end;
  gap: 8px;
`;

const ViewButtons = styled.div`
  display: flex;
  gap: 5px;
  padding-right: 1px;
  & button { display: flex; }
`;

const NavBar = styled.div`
  width: 35px;
  height: 118px;
  display: flex;
  flex-direction: column;
  align-items: center;
  padding: 1px 2px;
  border: 2px solid #c0c0c0;
  border-radius: 5px;
  background: #f4f4f4;
  & button { display: flex; }
`;

const NavDot = styled.button`
  align-self: flex-end;
  margin-top: ${(p) => (p.$last ? "auto" : "0")};
`;

const NavTool = styled.button`
  margin-top: ${(p) => p.$top}px;
  position: relative;
  & span { position: absolute; right: -3px; bottom: -5px; font-size: 10px; line-height: 12px; font-weight: 600; color: #5f93c2; }
`;

const NavCaret = styled(Caret)`
  margin: 8px 0 5px;
`;

const NavLine = styled.i`
  width: 26px;
  height: 1px;
  background: #c0c0c0;
  margin-bottom: 8px;
`;

const VerticalBar = styled.div`
  display: flex;
  flex-direction: column;
  justify-content: space-between;
  align-items: center;
  background: #f0f0f0;
`;

const VThumb = styled.div`
  align-self: flex-end;
  width: 10px;
  height: 15px;
  border: 1px solid #979797;
  background: #e4e4e4;
`;

const ViewBar = styled.div`
  grid-column: 1 / 3;
  display: flex;
  align-items: center;
  padding: 0 17px 0 16px;
`;

const ViewScale = styled.button`
  width: 62px;
  text-align: left;
  line-height: 16px;
`;

const ViewControl = styled.button`
  display: flex;
  width: 21px;
`;

const HScroll = styled.div`
  flex: 1;
  display: flex;
  align-items: center;
  justify-content: space-between;
  height: 15px;
  padding: 0 3px;
  background: #ebebeb;
`;

const HThumb = styled.div`
  width: 15px;
  height: 14px;
  border: 1px solid #979797;
  border-radius: 1px;
  background: linear-gradient(#f3f3f3, #cfcfcf);
`;

const HArrow = styled.button`
  display: flex;
  transform: rotate(${(p) => (p.$left ? 90 : -90)}deg);
`;

/* Diagonal section lines at a fixed spacing, trimmed to the rectangle they fill. */
const Hatch = ({ x, y, w, h, phase = 8, back = false }) => {
  const lines = [];
  const first = Math.ceil((x + y - phase) / 12) * 12 + phase;
  for (let c = first; c < x + y + w + h; c += 12) {
    const xa = Math.max(x, c - y - h);
    const xb = Math.min(x + w, c - y);
    const flip = (v) => (back ? 2 * x + w - v : v);
    lines.push(`M${flip(xa)} ${c - xa}L${flip(xb)} ${c - xb}`);
  }
  return <path d={lines.join("")} stroke="#ff00ff" />;
};

const Part = ({ x, y, w, h, ...rest }) => (
  <>
    <Hatch x={x} y={y} w={w} h={h} {...rest} />
    <rect x={x} y={y} width={w} height={h} />
  </>
);

const Stud = ({ y }) => <path d={`M658.500 ${y}h17v69h-17zl17 69m0-69l-17 69`} />;

const Hinge = ({ y }) => (
  <g transform={`translate(1000 ${y})`}>
    <path d="M33.500-6.500v-9q0-3 3-3h9q3 0 3 3v9M33.500 5.500v9q0 3 3 3h9q3 0 3-3v-9" />
    <path d="M66-6.500H24.500v12H66M24.500-5.500h-2v10h2M67.500-19.500h-2v39h2" />
    <path d="M41-14l3 3-3 3-3-3zM41 8l3 3-3 3-3-3z" fill="#000" stroke="none" />
    <circle cx="36" cy="-.5" r="3" fill="#333" />
    <rect x="41.500" y="-3.500" width="7" height="6" rx="3" />
    <path d="M55-2.500v4l-4-2z" fill="#000" stroke="none" />
  </g>
);

const PIN_ROWS = [490, 512, 534, 555, 577, 658, 680, 702, 723, 745];

const CabinetDrawing = () => (
  <Drawing width="600" height="700" viewBox="520 240 600 700" fill="none" stroke="#000" shapeRendering="crispEdges" role="img" aria-label="Cabinet left elevation">
    <Part x={675.5} y={257.5} w={13} h={69} phase={7} />
    <Part x={675.5} y={326.5} w={412} h={22} phase={8} />
    <path d="M1087.500 327.500h2v19h-2" />
    <Hatch x={675.5} y={348.5} w={14} h={13} phase={0} />
    <Hatch x={693.5} y={348.5} w={374} h={13} phase={0} />
    <path d="M675.500 348.500v522M675.500 361.500h392M689.500 348.500v522M693.500 348.500v522M689.500 356.500h4M1067.500 348.500v4" />
    <Part x={676.5} y={361.5} w={13} h={54} phase={4} />
    <Hatch x={689.5} y={356.5} w={4} h={514} phase={4} />
    <Part x={1067.5} y={352.5} w={13} h={518} phase={6} />
    <Part x={693.5} y={520.5} w={370} h={13} phase={2} />
    <Part x={693.5} y={688.5} w={370} h={13} phase={2} />
    <Part x={676.5} y={805.5} w={13} h={52} phase={4} />
    <Part x={675.5} y={857.5} w={392} h={13} phase={0} />
    <Part x={688.5} y={870.5} w={13} h={43} back phase={6} />
    <Part x={1016.5} y={870.5} w={12} h={43} phase={6} />
    <Stud y={344.5} />
    <Stud y={775.5} />
    <Hinge y={422} />
    <Hinge y={797} />
    <path d="M1080 389l11 12 6 11 4 13v14l-3 12-6 13-12 14M1079 393l8 9 6 11 4 13v12l-5 18-7 12-7 7" />
    <path d={PIN_ROWS.map((y) => `M739 ${y - 2}v4l-3-2zM1023 ${y - 2}v4l-3-2z`).join("")} fill="#000" stroke="none" shapeRendering="auto" />
    <g stroke="#ed1c24" strokeWidth="5" strokeLinejoin="round" shapeRendering="auto">
      <path d="M532.500 881h61v-7l61 14.500-61 15V895.500h-61z" />
      <rect x="669.500" y="863.500" width="53" height="60" rx="8" />
    </g>
  </Drawing>
);

const GREY = "#a8a8a8";
const viewIcons = [
  ["Detail Level", <><path d="M1 2h14v11H1z" fill="#eee" stroke={INK} /><path d="M2 4.500h12M2 8.500h12" stroke="#667" strokeDasharray="2 2" strokeWidth="2" /><path d="M4 6.500h10M4 10.500h10" stroke="#667" strokeDasharray="2 2" strokeWidth="2" /></>],
  ["Visual Style", <path d="M1 6h10v8H1zM1 6l4-4h10v8l-4 4M11 6l4-4M5 2v4" stroke={INK} fill="none" />],
  ["Sun Path", <path d="M6 5q-3 3 0 6M6 1v2M1 8h2M2 3l2 2M9 8l6 6M15 8l-6 6" stroke={GREY} />],
  ["Shadows", <><circle cx="6" cy="6" r="4" stroke={GREY} /><path d="M2 13h6M9 8l6 6M15 8l-6 6" stroke={GREY} /></>],
  ["Crop View", <><path d="M4 13V4h12M0 12h3M12 1v4" stroke={SKY} strokeWidth="2" /><path d="M6 5h9v8H6z" fill="#a9cdf0" /><path d="M8 6l7 7M15 6l-7 7" stroke="#c22" strokeWidth="2.200" /></>],
  ["Show Crop Region", <><path d="M4 13V4h12M0 12h3M8 7v6" stroke={SKY} strokeWidth="2" /><circle cx="12" cy="7" r="3" fill="#dff0ff" stroke={SKY} /><path d="M11 11h2v3h-2z" fill={SKY} /></>],
  ["Hide/Isolate", <><circle cx="4" cy="10" r="2.500" stroke={INK} /><circle cx="12" cy="8" r="2.500" stroke={INK} /><path d="M1 8L0 4M6 10l3-2M15 7V3" stroke={INK} /></>],
  ["Reveal Hidden", <><circle cx="8" cy="6" r="3" stroke={GREY} /><path d="M7 10h2v4H7z" stroke={GREY} /></>],
  ["View Properties", <><path d="M2 3h10v9H2z" stroke={GREY} strokeDasharray="2 1" /><path d="M8 7h7v7H8z" stroke={GREY} /></>],
  ["Analytical Model", <path d="M2 14V6l4-4h9M6 14V6h8M2 10h12M10 2v12" stroke={GREY} />],
  ["Constraints", <><path d="M1 1v14M14 1v6M1 4h13M3 2L1 4l2 2M12 2l2 2-2 2" stroke={INK} strokeWidth="1.200" /><path d="M9 10h6v5H9z" fill="#333" /><path d="M10 10V8h4v2" stroke="#333" /></>],
];

const View = () => (
  <ViewFrame>
    <Canvas>
      <CabinetDrawing />
      <ViewTools>
        <ViewButtons>
          <button aria-label="Minimize view"><svg width="14" height="12"><path d="M1.500 7.500h11v3h-11z" fill="#fff" stroke="#555" /></svg></button>
          <button aria-label="Restore view"><svg width="12" height="12" fill="#fff" stroke="#444"><path d="M3.500.5h8v8h-8zM.5 3.500h8v8h-8zM3.500 6.500h2v2h-2z" /></svg></button>
          <button aria-label="Close view"><svg width="14" height="12"><path d="M3 1l8 10M11 1L3 11" stroke="#444" strokeWidth="4" /><path d="M3 1l8 10M11 1L3 11" stroke="#fff" strokeWidth="1.500" /></svg></button>
        </ViewButtons>
        <NavBar>
          <NavDot aria-label="Close navigation bar"><svg width="9" height="9"><circle cx="4.500" cy="4.500" r="4" fill="#b9b9b9" /><path d="M3 3l3 3M6 3L3 6" stroke="#fff" /></svg></NavDot>
          <NavTool $top={11} aria-label="2D steering wheel">
            <svg width="22" height="20" fill="#e9e9ec" stroke="#9b9b9f"><path d="M10 1h9v9q0 9-9 9T1 10 10 1z" /><circle cx="10" cy="10" r="4.500" fill="#f6f6f6" /><path d="M7 14l-3 3M13 14l3 3" /></svg>
            <span>2D</span>
          </NavTool>
          <NavCaret $size={3} $color="#999" />
          <NavLine />
          <NavTool $top={0} aria-label="Zoom region">
            <svg width="16" height="16"><path d="M.5.5h10v10H.5z" fill="#b6d7a4" stroke="#84b070" /><circle cx="10.500" cy="10.500" r="3.500" fill="#f4f4f4" stroke="#888" /><path d="M13 13l3 3" stroke="#888" strokeWidth="1.600" /></svg>
          </NavTool>
          <NavCaret $size={3} $color="#999" />
          <NavDot $last aria-label="Navigation options"><svg width="9" height="9"><circle cx="4.500" cy="4.500" r="4" fill="#b9b9b9" /><path d="M2 4h5M3 6h3" stroke="#fff" /></svg></NavDot>
        </NavBar>
      </ViewTools>
    </Canvas>
    <VerticalBar>
      <ScrollArrow $up aria-label="Scroll up"><Caret /></ScrollArrow>
      <VThumb />
      <ScrollArrow aria-label="Scroll down"><Caret /></ScrollArrow>
    </VerticalBar>
    <ViewBar>
      <ViewScale>1" = 1'-0"</ViewScale>
      {viewIcons.map(([name, art]) => (
        <ViewControl key={name} aria-label={name}>{tiny(art)}</ViewControl>
      ))}
      <HScroll>
        <HArrow $left aria-label="Scroll left"><Caret /></HArrow>
        <HThumb />
        <HArrow aria-label="Scroll right"><Caret /></HArrow>
      </HScroll>
    </ViewBar>
  </ViewFrame>
);

/* ---------- status bar and taskbar ---------- */

const StatusBar = styled.footer`
  flex: none;
  height: 25px;
  display: flex;
  align-items: center;
  justify-content: space-between;
  padding: 0 63px 0 2px;
  border-top: 1px solid #8a8a8a;
  background: linear-gradient(#e8e8e8, #c9c9c9);
`;

const StatusTools = styled.div`
  display: flex;
  align-items: center;
  gap: 3px;
`;

const StatusButton = styled.button`
  width: 23px;
  height: 21px;
  display: flex;
  align-items: center;
  justify-content: center;
  background: #dadada;
`;

const FilterButton = styled.button`
  display: flex;
  align-items: center;
  gap: 1px;
  & span { padding-top: 3px; }
`;

const TaskBar = styled.div`
  flex: none;
  height: 14px;
  display: flex;
  overflow: hidden;
  border-top: 1px solid #0c2238;
  background: linear-gradient(90deg, #1e6597, #3a93cb 12%, #4aa9dc 24%, #3d95d0 35%, #2f86c8 50%, #3e9fe0 66%, #1e63ad 75%, #14407a 90%, #123a6d);
`;

const Task = styled.button`
  flex: none;
  width: ${(p) => p.$width}px;
  height: 30px;
  padding-top: ${(p) => p.$top || 3}px;
  display: flex;
  justify-content: center;
  border: solid ${(p) => (p.$open ? "#bfe3f5" : "transparent")};
  border-width: 1px 1px 0;
  background: ${(p) => (p.$open ? "linear-gradient(135deg, #a9d6ec, #62aed4)" : "none")};
`;

const Clock = styled.time`
  margin-left: auto;
  width: 61px;
  font-size: 12px;
  color: #fff;
  line-height: 18px;
  padding-top: 1px;
`;

const ShowDesktop = styled.button`
  width: 11px;
  border-left: 1px solid #6d8db0;
  background: #2c517f;
`;

const Pointer = () => <path d="M8 5v10l2-2 2 3 1.500-.5-1.500-4h3z" fill="#fff" stroke="#333" strokeWidth=".8" />;

const STATUS = [
  ["Select links", <><circle cx="4" cy="4" r="2.500" stroke="#c8951a" strokeWidth="2" /><circle cx="11" cy="4" r="2.500" stroke="#c8951a" strokeWidth="2" /></>],
  ["Select underlay", <path d="M1 7l5-4h9M1 12h8M1 12l5-4h3M6 3l6-2M1 7h7" stroke={SKY} strokeWidth="1.400" />],
  ["Select pinned", <path d="M2 1h9v3H9v3l3 3H1l3-3V4H2zM6 10v5" fill="#f08a4b" stroke="#a5481a" />],
  ["Select by face", <><path d="M1 4l7-2v11l-7 2z" fill="#a9d6ef" stroke={SKY} /><path d="M9 0l6 6M15 0L9 6" stroke="#c22" strokeWidth="2" /></>],
  ["Drag elements", <><path d="M5 1v8M1 5h8M4 2l1-1 1 1M4 8l1 1 1-1" stroke="#222" /><path d="M9 0l6 6M15 0L9 6" stroke="#c22" strokeWidth="2" /></>],
];

const Triangle = () => (
  <svg width="32" height="24"><rect width="32" height="24" fill="#f7d8d6" /><path d="M16 3L9 18l7-4 8 4z" fill="#b8161b" /></svg>
);

export default function App() {
  return (
    <Window>
      <Global />
      <Gradients />
      <AppHeader />
      <RibbonBar />
      <OptionsBar />
      <Workspace>
        <Dock>
          <Properties />
          <Browser />
        </Dock>
        <View />
      </Workspace>
      <StatusBar>
        <span>Click to select, TAB for alternates, CTRL adds, SHIFT unselects.</span>
        <StatusTools>
          {STATUS.map(([name, art]) => (
            <StatusButton key={name} aria-label={name}>{tiny(<>{art}<Pointer /></>)}</StatusButton>
          ))}
          <FilterButton>
            {tiny(<path d="M1 2h14l-6 7v6H7V9z" fill="#c5ccd6" stroke="#444" />)}
            <span>:0</span>
          </FilterButton>
        </StatusTools>
      </StatusBar>
      <TaskBar>
        <Task $width={60} $top={1} aria-label="Start"><svg width="36" height="36"><circle cx="18" cy="18" r="17" fill="#3a6f98" stroke="#9cc4de" /><path d="M9 9q5-3 9 0l-2 8H8z" fill="#e2592b" /><path d="M19 9q4 2 9 0l-2 8h-8z" fill="#86bd3c" /></svg></Task>
        <Task $width={59} $open aria-label="Explorer"><svg width="32" height="24"><path d="M2 2h8l2 3h12v4h6v15H2z" fill="#f3dd8c" stroke="#c9a545" /><path d="M3 2h4v3H3z" fill="#3aa34a" /><path d="M22 6h7v3h-7z" fill="#4aa0e0" /></svg></Task>
        <Task $width={65} $top={3} aria-label="Chrome"><svg width="30" height="30"><circle cx="15" cy="15" r="14" fill="#dc3f34" /></svg></Task>
        <Task $width={58} $open aria-label="Revit"><svg width="32" height="24"><rect width="32" height="24" fill="#c9dcef" /><path d="M9 7l8-4 6 7 2 12H9z" fill="#1f3768" /></svg></Task>
        <Task $width={54} $open aria-label="AutoCAD"><Triangle /></Task>
        <Task $width={78} aria-label="Reader"><svg width="32" height="24"><rect width="32" height="24" fill="#f5861f" /><path d="M8 14q8-12 16 0" stroke="#fff" strokeWidth="4" fill="none" /><path d="M26 0v6h6z" fill="#fff" /></svg></Task>
        <Task $width={48} aria-label="AutoCAD document"><Triangle /></Task>
        <Clock>12:22 PM</Clock>
        <ShowDesktop aria-label="Show desktop" />
      </TaskBar>
    </Window>
  );
}
